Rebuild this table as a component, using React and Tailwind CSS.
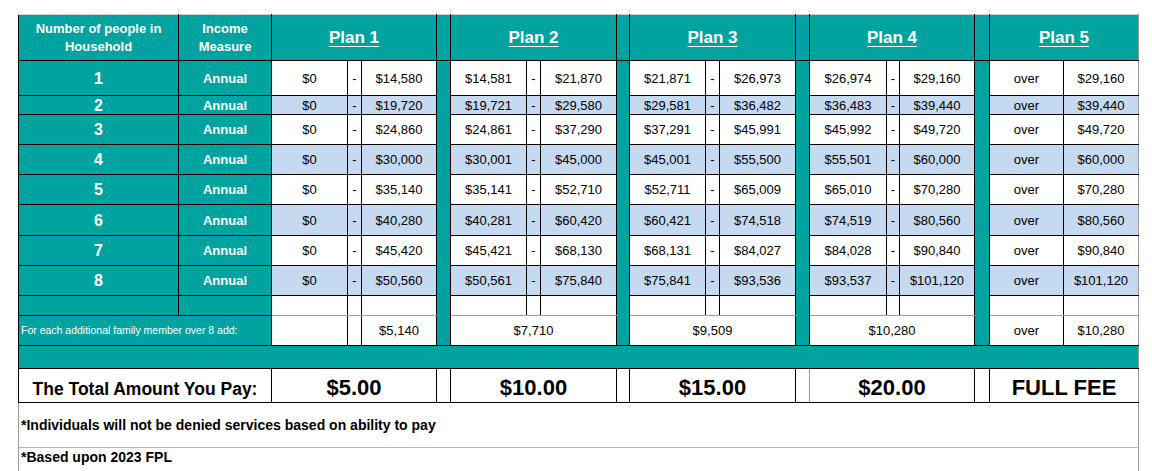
import React from 'react';

// sliding fee scale table, laid out like the spreadsheet it came from
const rows = [
  [1, '$0', '$14,580', '$14,581', '$21,870', '$21,871', '$26,973', '$26,974', '$29,160', '$29,160'],
  [2, '$0', '$19,720', '$19,721', '$29,580', '$29,581', '$36,482', '$36,483', '$39,440', '$39,440'],
  [3, '$0', '$24,860', '$24,861', '$37,290', '$37,291', '$45,991', '$45,992', '$49,720', '$49,720'],
  [4, '$0', '$30,000', '$30,001', '$45,000', '$45,001', '$55,500', '$55,501', '$60,000', '$60,000'],
  [5, '$0', '$35,140', '$35,141', '$52,710', '$52,711', '$65,009', '$65,010', '$70,280', '$70,280'],
  [6, '$0', '$40,280', '$40,281', '$60,420', '$60,421', '$74,518', '$74,519', '$80,560', '$80,560'],
  [7, '$0', '$45,420', '$45,421', '$68,130', '$68,131', '$84,027', '$84,028', '$90,840', '$90,840'],
  [8, '$0', '$50,560', '$50,561', '$75,840', '$75,841', '$93,536', '$93,537', '$101,120', '$101,120'],
];

const heights = ['h-[35px]', 'h-[19px]', 'h-[30px]', 'h-[30px]', 'h-[30px]', 'h-[31px]', 'h-[30px]', 'h-[30px]'];

const colWidths = [160, 93, 76, 14, 75, 14, 76, 14, 76, 13, 76, 14, 76, 14, 77, 13, 75, 15, 74, 75];

const fees = ['$5.00', '$10.00', '$15.00', '$20.00'];

function Sep({ white }) {
  return (
    <td className={`border-x border-black ${white ? 'bg-white' : 'bg-[#00a3a0]'}`} />
  );
}

function Val({ children, bg = 'bg-white', className = '', span }) {
  return (
    <td
      colSpan={span}
      className={`border border-black text-center text-[13px] leading-[15px] text-black ${bg} ${className}`}
    >
      {children}
    </td>
  );
}

function Dash({ bg = 'bg-white', dark, empty, className = '' }) {
  return (
    <td className={`border border-black ${dark ? '' : 'border-l-[#9a9a9a]'} text-center text-[13px] leading-[15px] ${bg} ${className}`}>
      {empty ? null : '-'}
    </td>
  );
}

export default function App() {
  return (
    <div className="bg-white h-[471px] pt-[14px] pl-[18px] font-['Liberation_Sans',Arial,sans-serif] overflow-hidden">
      <table className="table-fixed border-collapse w-[1121px]">
        <colgroup>
          {colWidths.map((w, i) => (
            <col key={i} style={{ width: w }} />
          ))}
        </colgroup>
        <tbody>
          <tr className="h-[46px] bg-[#00a3a0] text-white font-bold">
            <td className="border border-black border-t-[#d0d0d0] text-center text-[13px] leading-[18px]">
              Number of people in<br />Household
            </td>
            <td className="border border-black border-t-[#d0d0d0] text-center text-[13px] leading-[18px]">
              Income<br />Measure
            </td>
            {[1, 2, 3, 4, 5].map((n) => (
              <React.Fragment key={n}>
                <td
                  colSpan={n === 5 ? 2 : 3}
                  className={`border border-black border-t-[#d0d0d0] text-center text-[17px] underline underline-offset-[3px] ${n === 5 ? 'border-r-[#9a9a9a]' : ''}`}
                >
                  Plan {n}
                </td>
                {n < 5 && <td className="border border-black border-t-[#d0d0d0]" />}
              </React.Fragment>
            ))}
          </tr>

          {rows.map((r, i) => {
            const bg = i % 2 === 1 ? 'bg-[#c5d9f1]' : 'bg-white';
            return (
              <tr key={r[0]} className={heights[i]}>
                <td className="border border-black bg-[#00a3a0] text-center text-white font-bold text-[16px] leading-[17px]">
                  {r[0]}
                </td>
                <td className="border border-black bg-[#00a3a0] text-center text-white font-bold text-[13px] leading-[15px]">
                  Annual
                </td>
                <Val bg={bg}>{r[1]}</Val>
                <Dash bg={bg} />
                <Val bg={bg}>{r[2]}</Val>
                <Sep />
                <Val bg={bg}>{r[3]}</Val>
                <Dash bg={bg} />
                <Val bg={bg}>{r[4]}</Val>
                <Sep />
                <Val bg={bg}>{r[5]}</Val>
                <Dash bg={bg} />
                <Val bg={bg}>{r[6]}</Val>
                <Sep />
                <Val bg={bg}>{r[7]}</Val>
                <Dash bg={bg} dark />
                <Val bg={bg}>{r[8]}</Val>
                <Sep />
                <Val bg={bg}>over</Val>
                <Val bg={bg} className="border-r-[#9a9a9a]">{r[9]}</Val>
              </tr>
            );
          })}

          <tr className="h-[20px]">
            <td className="border border-black bg-[#00a3a0]" />
            <td className="border border-black bg-[#00a3a0]" />
            <Val className="border-b-[#a0a0a0]" />
            <Dash empty className="border-b-[#a0a0a0]" />
            <Val className="border-b-[#a0a0a0]" />
            <Sep />
            <Val className="border-b-[#a0a0a0]" />
            <Dash empty className="border-b-[#a0a0a0]" />
            <Val className="border-b-[#a0a0a0]" />
            <Sep />
            <Val className="border-b-[#a0a0a0]" />
            <Dash empty className="border-b-[#a0a0a0]" />
            <Val className="border-b-[#a0a0a0]" />
            <Sep />
            <Val className="border-b-[#a0a0a0]" />
            <Dash empty dark className="border-b-[#a0a0a0]" />
            <Val className="border-b-[#a0a0a0]" />
            <Sep />
            <Val className="border-b-[#a0a0a0]" />
            <Val className="border-b-[#a0a0a0] border-r-[#9a9a9a]" />
          </tr>

          <tr className="h-[30px]">
            <td
              colSpan={2}
              className="border border-black bg-[#00a3a0] text-white text-[10.5px] leading-[13px] pl-[2px] whitespace-nowrap"
            >
              For each additional family member over 8 add:
            </td>
            <Val className="border-t-[#a0a0a0]" />
            <Dash empty className="border-t-[#a0a0a0]" />
            <Val className="border-t-[#a0a0a0]">$5,140</Val>
            <Sep />
            <Val span={3} className="border-t-[#a0a0a0]">$7,710</Val>
            <Sep />
            <Val span={3} className="border-t-[#a0a0a0]">$9,509</Val>
            <Sep />
            <Val span={3} className="border-t-[#a0a0a0]">$10,280</Val>
            <Sep />
            <Val className="border-t-[#a0a0a0]">over</Val>
            <Val className="border-t-[#a0a0a0] border-r-[#9a9a9a]">$10,280</Val>
          </tr>

          <tr className="h-[23px]">
            <td colSpan={20} className="border border-black border-r-[#9a9a9a] bg-[#00a3a0]" />
          </tr>

          <tr className="h-[34px] font-bold text-black">
            <td colSpan={2} className="border border-black text-center text-[17.5px] leading-[20px] pt-[6px] whitespace-nowrap">
              The Total Amount You Pay:
            </td>
            {fees.map((f, i) => (
              <React.Fragment key={f}>
                <td colSpan={3} className="border border-black text-center text-[22px] leading-[24px] pt-[4px]">
                  {f}
                </td>
                <td className={`border border-black ${i === 2 ? 'border-r-[#9a9a9a]' : ''} ${i === 3 ? 'border-l-[#9a9a9a]' : ''}`} />
              </React.Fragment>
            ))}
            <td colSpan={2} className="border border-black border-r-[#9a9a9a] text-center text-[22px] leading-[24px] pt-[4px]">
              FULL FEE
            </td>
          </tr>

          <tr className="h-[45px]">
            <td
              colSpan={20}
              className="border border-black border-x-[#9a9a9a] border-b-[#b8b8b8] pl-[2px] text-[14px] leading-[17px] font-bold text-black"
            >
              *Individuals will not be denied services based on ability to pay
            </td>
          </tr>

          <tr className="h-[30px]">
            <td
              colSpan={20}
              className="border border-x-[#9a9a9a] border-t-[#b8b8b8] border-b-0 pl-[2px] pt-[1px] align-top text-[14px] leading-[17px] font-bold text-black"
            >
              *Based upon 2023 FPL
            </td>
          </tr>
        </tbody>
      </table>
    </div>
  );
}
